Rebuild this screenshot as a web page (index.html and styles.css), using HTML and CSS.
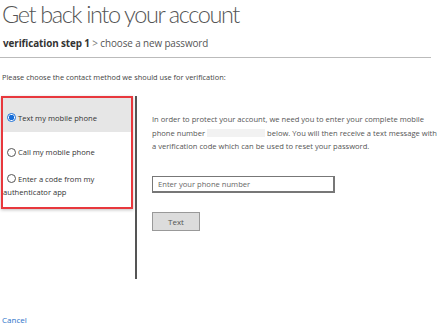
FILE: index.html
```html
<!DOCTYPE html>
<html>
<head>
<meta charset="utf-8">
<link rel="stylesheet" href="styles.css">
</head>
<body>
<div class="page">
  <h1 class="title">Get back into your account</h1>
  <div class="crumbs"><span class="step">verification step 1</span> <span class="sep">&gt;</span> choose a new password</div>
  <p class="intro">Please choose the contact method we should use for verification:</p>
  <div class="main">
    <div class="left">
      <div class="options">
        <label class="opt selected"><span class="radio on"></span>Text my mobile phone</label>
        <label class="opt"><span class="radio"></span>Call my mobile phone</label>
        <label class="opt multi"><span class="radio"></span>Enter a code from my authenticator app</label>
      </div>
    </div>
    <div class="right">
      <p class="desc">In order to protect your account, we need you to enter your complete mobile phone number <span class="redact"></span> below. You will then receive a text message with a verification code which can be used to reset your password.</p>
      <div class="field">Enter your phone number</div>
      <div class="btn">Text</div>
    </div>
  </div>
  <a class="cancel" href="#">Cancel</a>
</div>
</body>
</html>
```
FILE: styles.css
```css
html, body { margin: 0; padding: 0; background: #fff; }
body { font-family: "Open Sans", "Noto Sans", sans-serif; color: #333; }
.page { width: 444px; height: 326px; position: relative; overflow: hidden; }
.title { margin: 0; padding: 0 0 0 2px; font-family: "Lato", "Open Sans", sans-serif; font-size: 23.5px; font-weight: 300; line-height: 28px; color: #555; letter-spacing: -1.4px; }
.crumbs { margin: 8px 0 0 0; width: 431px; padding: 0 0 7px 3px; box-sizing: border-box; font-size: 9.9px; line-height: 14px; color: #555; border-bottom: 1px solid #bbb; letter-spacing: -0.1px; }
.step { font-weight: 700; color: #333; }
.sep { color: #777; }
.intro { margin: 14px 0 0 2px; font-size: 7.4px; line-height: 10px; color: #444; }
.main { display: flex; margin-top: 14px; }
.left { width: 135px; height: 183px; border-right: 2px solid #555; }
.options { margin-left: 1px; width: 128px; height: 109px; border: 2px solid #e8383d; box-shadow: 0 1px 3px rgba(0,0,0,0.25); background: #fff; }
.opt { display: flex; align-items: center; font-size: 7.6px; color: #333; height: 38px; padding-left: 4px; padding-top: 2px; box-sizing: border-box; }
.opt.selected { background: #e6e6e6; height: 34px; padding-top: 5px; }
.opt.multi { display: block; height: auto; padding-left: 0; line-height: 13px; padding-top: 3px; }
.opt.multi .radio { margin-left: 4px; vertical-align: -1px; }
.radio { display: inline-block; width: 7px; height: 7px; border: 1px solid #555; border-radius: 50%; margin-right: 2px; box-sizing: content-box; background: #fff; }
.radio.on { border-color: #1a6fd8; background: radial-gradient(circle, #1a6fd8 0 2.6px, #fff 3px); }
.right { padding-left: 15px; padding-top: 17px; }
.desc { margin: 0; width: 288px; font-size: 7.6px; line-height: 13.5px; color: #555; }
.redact { display: inline-block; width: 58px; height: 8px; background: #f2f2f2; vertical-align: -1px; }
.field { margin-top: 22px; width: 175px; height: 14px; border: 2px solid #777; border-width: 1px 2px 2px 1px; font-size: 7.6px; line-height: 14px; padding-left: 5px; color: #666; }
.btn { margin-top: 19px; width: 46px; height: 17px; border: 1px solid #999; background: #dcdcdc; font-size: 8px; line-height: 17px; text-align: center; color: #555; }
.cancel { position: absolute; left: 2px; top: 314px; font-size: 8px; color: #2a72c9; text-decoration: none; }
```
